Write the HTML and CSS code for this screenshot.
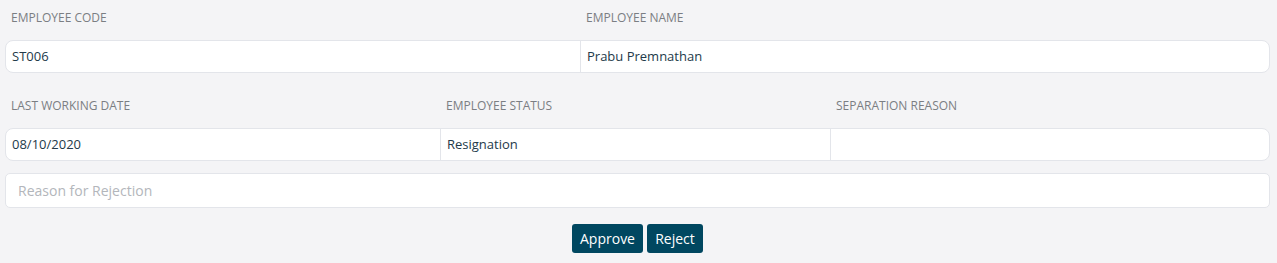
FILE: index.html
```html
<!DOCTYPE html>
<html>
<head>
<meta charset="utf-8">
<link rel="stylesheet" href="styles.css">
</head>
<body>
<div class="page">
  <div class="group group-first">
    <div class="labels">
      <div class="label c1">EMPLOYEE CODE</div>
      <div class="label c2">EMPLOYEE NAME</div>
    </div>
    <div class="box">
      <div class="cell c1">ST006</div>
      <div class="cell c2">Prabu Premnathan</div>
    </div>
  </div>
  <div class="group">
    <div class="labels">
      <div class="label d1">LAST WORKING DATE</div>
      <div class="label d2">EMPLOYEE STATUS</div>
      <div class="label d3">SEPARATION REASON</div>
    </div>
    <div class="box">
      <div class="cell d1">08/10/2020</div>
      <div class="cell d2">Resignation</div>
      <div class="cell d3"></div>
    </div>
  </div>
  <textarea class="reason" placeholder="Reason for Rejection"></textarea>
  <div class="actions">
    <button class="btn btn-approve">Approve</button>
    <button class="btn btn-reject">Reject</button>
  </div>
</div>
</body>
</html>
```
FILE: styles.css
```css
html, body {
  margin: 0;
  padding: 0;
  background: #f4f4f6;
}
body {
  font-family: "Open Sans", "Liberation Sans", sans-serif;
  width: 1277px;
  height: 263px;
  overflow: hidden;
}
.page {
  padding: 10px 7px 0 5px;
  display: flex;
  flex-direction: column;
}
.group { margin-top: 25px; }
.group-first { margin-top: 0; }
.labels {
  display: flex;
  margin-bottom: 14px;
}
.label {
  font-size: 12px;
  line-height: 16px;
  color: #7b7e83;
  padding-left: 6px;
  box-sizing: border-box;
  text-transform: uppercase;
}
.box {
  display: flex;
  height: 33px;
  box-sizing: border-box;
  border: 1px solid #e3e5ea;
  border-radius: 8px;
  background: #fff;
  overflow: hidden;
}
.cell {
  font-size: 13px;
  color: #233a4a;
  padding-left: 6px;
  padding-bottom: 1px;
  box-sizing: border-box;
  display: flex;
  align-items: center;
  border-left: 1px solid #e3e5ea;
}
.cell:first-child { border-left: none; }
.box .c1 { width: 574px; }
.labels .c1 { width: 575px; }
.c2 { flex: 1; }
.box .d1 { width: 434px; }
.labels .d1 { width: 435px; }
.d2 { width: 390px; }
.d3 { flex: 1; }
.reason {
  margin: 12px 0 0 0;
  height: 35px;
  box-sizing: border-box;
  border: 1px solid #e3e5ea;
  border-radius: 5px;
  background: #fff;
  resize: none;
  font-family: "Open Sans", "Liberation Sans", sans-serif;
  font-size: 14px;
  padding: 7px 12px;
  outline: none;
}
.reason::placeholder { color: #b3b6bb; }
.actions {
  margin-top: 16px;
  display: flex;
  justify-content: center;
  gap: 4px;
}
.btn {
  height: 29px;
  border: none;
  border-radius: 3px;
  background: #004760;
  color: #fff;
  font-family: "Open Sans", "Liberation Sans", sans-serif;
  font-size: 14px;
  padding: 0 8px;
  cursor: pointer;
}
.btn-approve { width: 71px; }
.btn-reject { width: 56px; }
```
